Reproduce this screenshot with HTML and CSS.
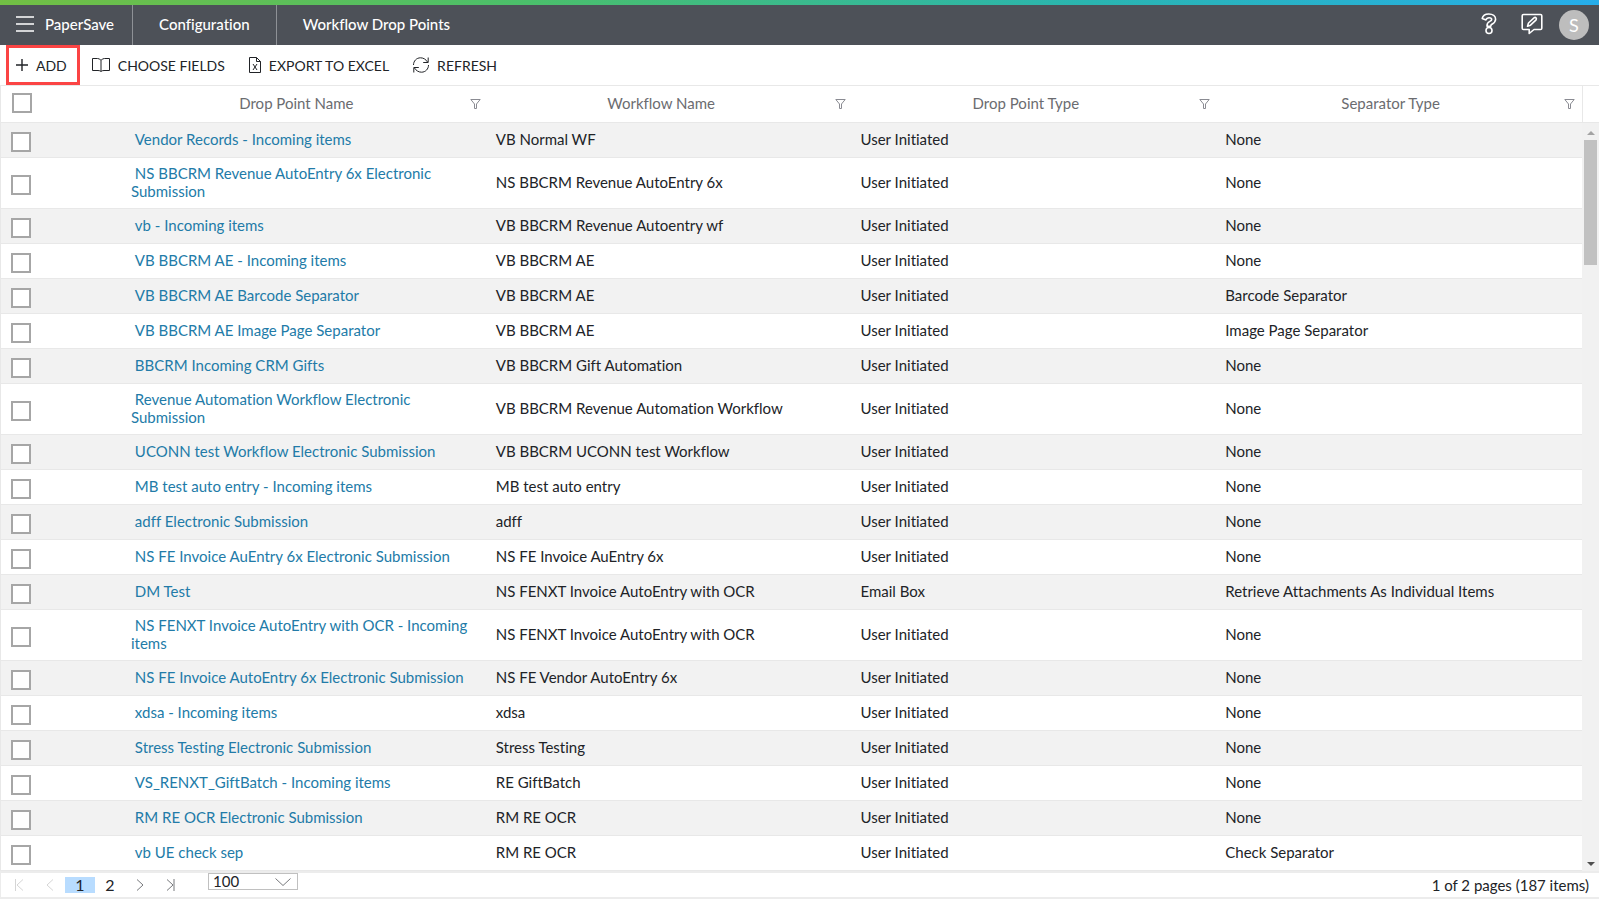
FILE: index.html
```html
<!DOCTYPE html>
<html lang="en">
  <head>
    <meta charset="UTF-8" />
    <meta name="viewport" content="width=device-width, initial-scale=1.0" />
    <title>PaperSave - Workflow Drop Points</title>
    <link rel="stylesheet" href="styles.css">
  </head>
  <body>
    <header class="topbar">
      <nav class="crumbs">
        <a href="#" class="crumb brand">
          <svg class="menu-icon" viewBox="0 0 18 16" fill="none" stroke="currentColor" stroke-width="1.3">
            <path d="M0 1h18M0 8h18M0 15h18" />
          </svg>
          PaperSave
        </a>
        <a href="#" class="crumb">Configuration</a>
        <a href="#" class="crumb">Workflow Drop Points</a>
      </nav>
      <div class="user-tools">
        <button class="icon-btn help" aria-label="Help">
          <svg width="16" height="22" viewBox="0 0 16 22" fill="none" stroke="currentColor" stroke-width="1.6" stroke-linejoin="round">
            <path d="M1.200 5.500C1.800 2.500 4.500 1 7.800 1c4 0 6.800 2.200 6.800 5.300 0 3-2 4-3.800 5-.8.500-1 1-1 1.900H6c-.2-2.600.9-3.900 2.800-4.800 1.200-.6 1.900-1.100 1.900-1.900 0-1.100-1-1.800-2.600-1.800-1.800 0-2.700.8-3.100 2.200z" />
            <circle cx="8" cy="17.500" r="3" />
          </svg>
        </button>
        <button class="icon-btn" aria-label="Feedback">
          <svg width="22" height="22" viewBox="0 0 22 22" fill="none" stroke="currentColor" stroke-width="1.6" stroke-linejoin="round">
            <path d="M2.500 1.500h17q1.300 0 1.300 1.300v12.400q0 1.300-1.300 1.300h-6.500L8.200 20.500v-4H2.500q-1.300 0-1.300-1.300V2.800q0-1.300 1.300-1.300z" />
            <path d="M6.500 13.200l1-3.200 5.500-5.200q1.200-.8 2 .1t.1 2L9.500 12.200z" />
          </svg>
        </button>
        <button class="avatar">S</button>
      </div>
    </header>

    <div class="toolbar">
      <button class="tool tool-add">
        <svg width="12" height="12" viewBox="0 0 12 12" stroke="currentColor" stroke-width="1.4">
          <path d="M6 0v12M0 6h12" />
        </svg>
        <span>ADD</span>
      </button>
      <button class="tool">
        <svg width="18" height="14" viewBox="0 0 18 14" fill="none" stroke="currentColor">
          <path d="M9 2.500Q8 .5 5.500.5h-5v12h5.500q2 0 3 1 1-1 3-1h5.500V.5h-5Q10 .5 9 2.500zV13" />
        </svg>
        <span>CHOOSE FIELDS</span>
      </button>
      <button class="tool">
        <svg width="12" height="16" viewBox="0 0 12 16" fill="none" stroke="currentColor">
          <path d="M.5.5h7l4 4v11H.5zM7.500.5v4h4M4 7l4 6M8 7l-4 6" />
        </svg>
        <span>EXPORT TO EXCEL</span>
      </button>
      <button class="tool">
        <svg width="16" height="16" viewBox="0 0 16 16" fill="none" stroke="currentColor">
          <path d="M.5 8C.5 4 3.500.8 7.500.8c3 0 5.500 1.700 7 4.200M15.200.5V5.500h-5M15.500 8c0 4-3 7.200-7 7.200-3 0-5.500-1.700-7-4.200M.8 15.500v-5h5" />
        </svg>
        <span>REFRESH</span>
      </button>
    </div>

    <main class="grid">
      <div class="grid-head">
        <table class="table">
          <colgroup><col class="col-check"><col><col><col><col></colgroup>
          <thead>
            <tr>
              <th class="check"><input type="checkbox" aria-label="Select all" /></th>
              <th><div class="th">Drop Point Name</div></th>
              <th><div class="th">Workflow Name</div></th>
              <th><div class="th">Drop Point Type</div></th>
              <th><div class="th">Separator Type</div></th>
            </tr>
          </thead>
        </table>
      </div>
      <div class="grid-body">
        <table class="table">
          <colgroup><col class="col-check"><col><col><col><col></colgroup>
          <tbody id="rows"></tbody>
        </table>
        <div class="scrollbar">
          <span class="arrow-up"></span>
          <span class="thumb"></span>
          <span class="arrow-down"></span>
        </div>
      </div>
    </main>

    <footer class="pager">
      <button class="page-btn" disabled aria-label="First page">
        <svg width="10" height="12" viewBox="0 0 10 12"><path d="M.5 0v12M8 .5L2 6l6 5.500" /></svg>
      </button>
      <button class="page-btn" disabled aria-label="Previous page">
        <svg width="10" height="12" viewBox="0 0 10 12"><path d="M8 .5L2 6l6 5.500" /></svg>
      </button>
      <button class="page-btn current">1</button>
      <button class="page-btn">2</button>
      <button class="page-btn" aria-label="Next page">
        <svg width="10" height="12" viewBox="0 0 10 12"><path d="M2 .5L8 6l-6 5.500" /></svg>
      </button>
      <button class="page-btn" aria-label="Last page">
        <svg width="10" height="12" viewBox="0 0 10 12"><path d="M9 0v12M2 .5L8 6l-6 5.500" /></svg>
      </button>
      <div class="page-size">
        <select aria-label="Page size">
          <option>50</option>
          <option selected>100</option>
        </select>
        <svg width="16" height="8" viewBox="0 0 16 8"><path d="M.5.5L8 7.500 15.500.5" /></svg>
      </div>
      <span class="summary">1 of 2 pages (187 items)</span>
    </footer>

    <script src="script.js"></script>
  </body>
</html>
```

FILE: styles.css
```css
* {
  box-sizing: border-box;
}

body {
  margin: 0;
  background: #ffffff;
  color: #212327;
  font-family: Lato, "Liberation Sans", sans-serif;
  font-size: 15px;
  line-height: 18px;
  font-variant-ligatures: none;
}

button {
  border: none;
  padding: 0;
  background: none;
  color: inherit;
  font: inherit;
  cursor: pointer;
}

a {
  text-decoration: none;
}

/* top bar */
.topbar {
  display: flex;
  justify-content: space-between;
  height: 45px;
  padding-top: 5px;
  color: #ffffff;
  background:
    linear-gradient(90deg, #72bf44, #4bbf6b 33%, #2ab5b0 68%, #26adeb) top / 100% 5px no-repeat,
    #4d5158;
}

.crumbs {
  display: flex;
}

.crumb {
  display: flex;
  align-items: center;
  padding: 0 26px 2px;
  color: #ffffff;
  font-weight: 500;
}

.crumb + .crumb {
  border-left: 1px solid #8e9196;
}

.brand {
  gap: 11px;
  padding: 0 18px 2px 16px;
}

.menu-icon {
  width: 18px;
  height: 16px;
}

.user-tools {
  display: flex;
  align-items: center;
  gap: 16px;
  padding-right: 10px;
}

.icon-btn {
  display: flex;
  padding-bottom: 2px;
}

.help {
  margin-right: 8px;
}

.avatar {
  width: 30px;
  height: 30px;
  border-radius: 50%;
  background: #bdbdbd;
  font-size: 18px;
}

/* toolbar */
.toolbar {
  display: flex;
  height: 40px;
  padding-left: 6px;
}

.tool {
  display: flex;
  align-items: center;
  gap: 8px;
  padding: 0 12px;
  font-size: 14px;
}

.tool span {
  padding-top: 2px;
}

.tool-add {
  padding: 0 10px 0 7px;
  border: 3px solid #fb4444;
}

/* grid */
.grid {
  border-top: 1px solid #e8e8e8;
  border-left: 1px solid #e8e8e8;
}

.grid-head {
  padding-right: 16px;
  border-bottom: 1px solid #e8e8e8;
}

.grid-head .table {
  border-right: 1px solid #e8e8e8;
}

.grid-body {
  display: flex;
}

.table {
  width: 100%;
  table-layout: fixed;
  border-collapse: separate;
  border-spacing: 0;
}

.col-check {
  width: 122px;
}

.table th {
  height: 36px;
  padding: 0;
  color: #6b6c70;
  font-weight: 400;
}

.th {
  display: flex;
  align-items: center;
  justify-content: space-between;
  padding-right: 7px;
}

.th-label {
  flex: 1;
  padding-bottom: 2px;
}

.filter {
  display: flex;
  color: #8a8b92;
}

.table td {
  padding: 6px 8px 8px;
  border-bottom: 1px solid #e8e8e8;
}

.table tbody tr:nth-child(odd) {
  background: #f2f2f2;
}

.table a {
  color: #227ba8;
  white-space: pre-wrap;
}

.table td.check {
  padding: 9px 10px 5px;
}

.table th.check {
  padding: 7px 11px 9px;
}

.check input {
  display: block;
  appearance: none;
  width: 20px;
  height: 20px;
  margin: 0;
  border: 2px solid #a6a6a6;
  background: #ffffff;
}

.scrollbar {
  display: flex;
  flex-direction: column;
  align-items: center;
  flex: 0 0 17px;
  padding: 8px 0 5px;
  background: #f1f1f1;
}

.arrow-up,
.arrow-down {
  border: 4px solid transparent;
}

.arrow-up {
  border-top: none;
  border-bottom-color: #a3a3a3;
}

.arrow-down {
  margin-top: auto;
  border-bottom: none;
  border-top-color: #505050;
}

.thumb {
  width: 13px;
  height: 125px;
  margin-top: 5px;
  background: #c1c1c1;
}

/* pager */
.pager {
  display: flex;
  align-items: center;
  height: 28px;
  padding: 0 10px 0 4px;
  border: 1px solid #ececec;
  border-width: 2px 0 2px 1px;
}

.page-btn {
  width: 30px;
  height: 16px;
  font-size: 16px;
  line-height: 16px;
}

.page-btn svg,
.page-size svg {
  fill: none;
  stroke: #77787c;
}

.page-btn:disabled svg {
  stroke: #d5d5d5;
}

.page-btn.current {
  background: #b8dcff;
}

.page-size {
  display: flex;
  align-items: center;
  align-self: flex-start;
  position: relative;
  margin-left: 23px;
}

.page-size select {
  width: 90px;
  height: 17px;
  padding: 0 4px;
  border: 1px solid #c0c0c0;
  background: #ffffff;
  color: inherit;
  font: inherit;
  line-height: 15px;
  appearance: none;
}

.page-size svg {
  position: absolute;
  right: 7px;
  pointer-events: none;
}

.summary {
  margin-left: auto;
}
```

FILE: script.js
```js
const drops = [
  ["Vendor Records - Incoming items", "VB Normal WF"],
  ["NS BBCRM Revenue AutoEntry 6x Electronic Submission", "NS BBCRM Revenue AutoEntry 6x"],
  ["vb - Incoming items", "VB BBCRM Revenue Autoentry wf"],
  ["VB BBCRM AE - Incoming items", "VB BBCRM AE"],
  ["VB BBCRM AE Barcode Separator", "VB BBCRM AE", "User Initiated", "Barcode Separator"],
  ["VB BBCRM AE Image Page Separator", "VB BBCRM AE", "User Initiated", "Image Page Separator"],
  ["BBCRM Incoming CRM Gifts", "VB BBCRM Gift Automation"],
  ["Revenue Automation Workflow Electronic Submission", "VB BBCRM Revenue Automation Workflow"],
  ["UCONN test Workflow Electronic Submission", "VB BBCRM UCONN test Workflow"],
  ["MB test auto entry - Incoming items", "MB test auto entry"],
  ["adff Electronic Submission", "adff"],
  ["NS FE Invoice AuEntry 6x Electronic Submission", "NS FE Invoice AuEntry 6x"],
  ["DM Test", "NS FENXT Invoice AutoEntry with OCR", "Email Box", "Retrieve Attachments As Individual Items"],
  ["NS FENXT Invoice AutoEntry with OCR - Incoming items", "NS FENXT Invoice AutoEntry with OCR"],
  ["NS FE Invoice AutoEntry 6x Electronic Submission", "NS FE Vendor AutoEntry 6x"],
  ["xdsa - Incoming items", "xdsa"],
  ["Stress Testing Electronic Submission", "Stress Testing"],
  ["VS_RENXT_GiftBatch - Incoming items", "RE GiftBatch"],
  ["RM RE OCR Electronic Submission", "RM RE OCR"],
  ["vb UE check sep", "RM RE OCR", "User Initiated", "Check Separator"],
];

const filterIcon =
  '<svg width="11" height="10" viewBox="0 0 11 10" fill="none" stroke="currentColor"><path d="M.8.5h9.400L6.500 5v4.500h-2V5z" /></svg>';

document.querySelectorAll(".th").forEach((th) => {
  const label = th.textContent;
  th.innerHTML = `<span class="th-label">${label}</span><button class="filter" aria-label="Filter ${label}">${filterIcon}</button>`;
});

document.getElementById("rows").innerHTML = drops
  .map(
    ([name, workflow, type = "User Initiated", separator = "None"]) => `
    <tr>
      <td class="check"><input type="checkbox" aria-label="Select ${name}" /></td>
      <td><a href="#"> ${name}</a></td>
      <td>${workflow}</td>
      <td>${type}</td>
      <td>${separator}</td>
    </tr>`
  )
  .join("");
```
